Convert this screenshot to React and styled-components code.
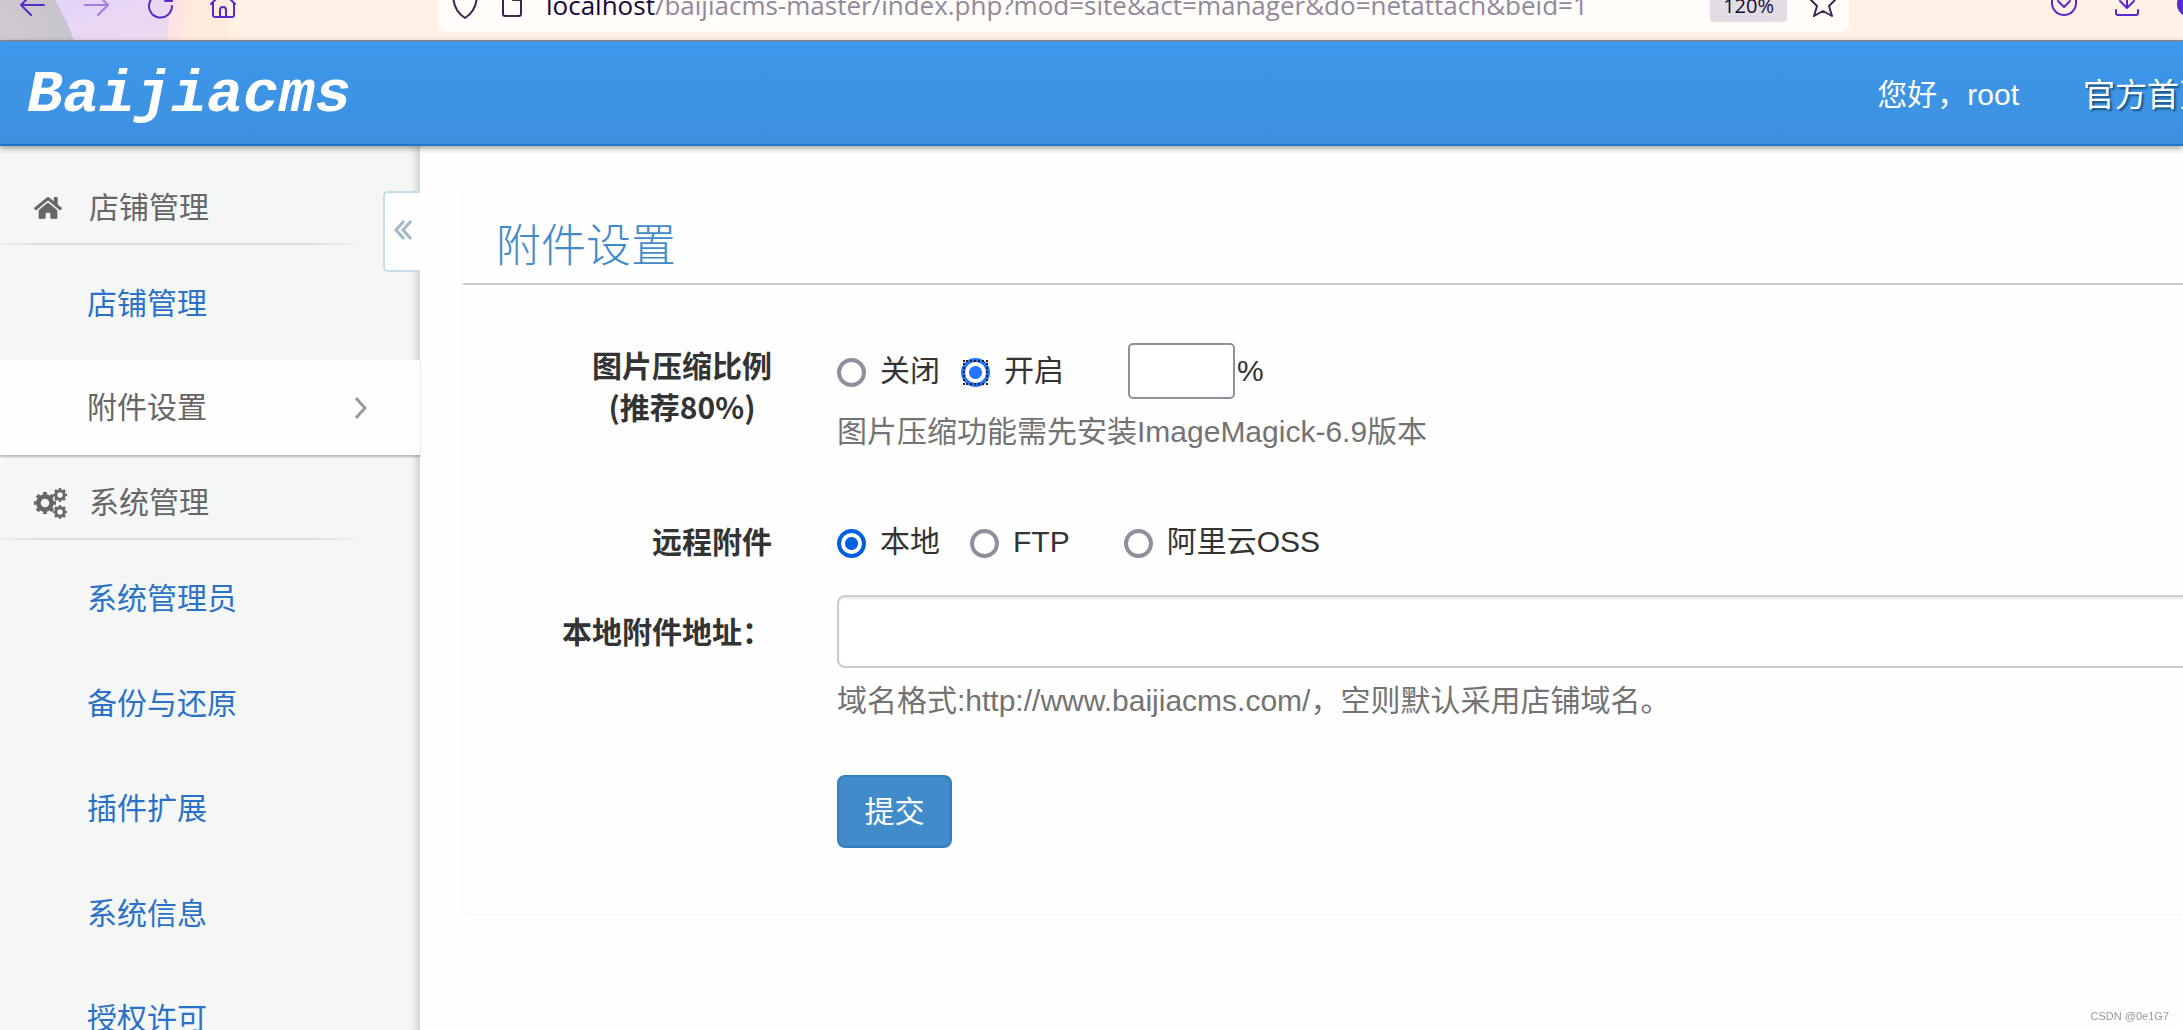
import React, { useState } from 'react';
import styled, { createGlobalStyle } from 'styled-components';
import { FaHome } from 'react-icons/fa';

const GlobalStyle = createGlobalStyle`
  * {
    box-sizing: border-box;
  }

  body {
    margin: 0;
    background: #fefefe;
    color: #333;
    font-family: "Liberation Sans", "Noto Sans CJK SC", sans-serif;
    font-size: 30px;
    line-height: 42px;
  }

  html, body, #root {
    height: 100%;
    overflow: hidden;
  }

  a {
    text-decoration: none;
  }
`

const Page = styled.div`
  display: flex;
  flex-direction: column;
  min-height: 100vh;
`

const BrowserBar = styled.div`
  display: flex;
  align-items: flex-end;
  flex: 0 0 41px;
  height: 41px;
  overflow: hidden;
  border-bottom: 1px solid #b08474;
  background:
    radial-gradient(circle at -104px 100px, #ddd6d8 0, #c9c5cc 187px, transparent 188px),
    linear-gradient(97deg, transparent 170px, #ffe2e2 171px 184px, transparent 185px),
    linear-gradient(160deg, #e2d2fb, #f6e0e6 170px) 0 0 / 176px 100% no-repeat,
    linear-gradient(90deg, #ffebdc 228px, #fff1e5 229px);
`

const NavButtons = styled.div`
  display: flex;
  flex: 0 0 438px;
  padding-left: 12px;
  gap: 24px;
`

const BarButton = styled.button`
  display: flex;
  width: 40px;
  height: 40px;
  padding: 0;
  border: 0;
  background: none;
  color: ${props => props.$dark ? '#352850' : '#592acb'};
  opacity: ${props => props.$faded ? 0.5 : 1};

  svg {
    width: 40px;
    height: 40px;
  }
`

const AddressBar = styled.div`
  display: flex;
  flex: 0 1 1411px;
  height: 40px;
  margin-bottom: 8px;
  padding: 0 6px 0 4px;
  align-items: flex-end;
  border-radius: 8px;
  background: #fffcfa;

  ${BarButton} {
    margin-bottom: -8px;
  }
`

const Url = styled.span`
  flex: 1;
  margin-left: 24px;
  color: #8f899c;
  font-family: "Open Sans", "Noto Sans", sans-serif;
  font-size: 26px;
  line-height: 34px;
  padding-bottom: 10px;
  white-space: nowrap;
`

const UrlHost = styled.span`
  color: #15083a;
`

const ZoomLevel = styled.button`
  height: 38px;
  margin: 0 16px 10px 0;
  padding: 6px 13px 0;
  border: 0;
  border-radius: 4px;
  background: #e2dde2;
  color: #15083a;
  font-family: "Open Sans", sans-serif;
  font-size: 20px;
  line-height: 32px;
`

const BarTools = styled.div`
  display: flex;
  flex: 0 0 auto;
  gap: 23px;
  margin-left: auto;
  margin-right: -27px;
`

const Header = styled.header`
  position: relative;
  z-index: 1;
  display: flex;
  align-items: center;
  flex: 0 0 105px;
  height: 105px;
  padding: 4px 0 0 27px;
  border-bottom: 2px solid #2175c5;
  background: linear-gradient(#3d97eb, #3e91df);
  box-shadow: 0 2px 6px rgba(0, 0, 0, 0.4);
  color: white;
  white-space: nowrap;
`

const Logo = styled.a`
  flex: 1;
  color: white;
  font-family: "Liberation Mono", monospace;
  font-size: 60px;
  font-style: italic;
  font-weight: bold;
  line-height: 64px;
`

const Greeting = styled.span`
  margin-right: 64px;
`

const HeaderLink = styled.a`
  flex: 0 0 100px;
  overflow: hidden;
  color: white;
  font-size: 32px;
  text-shadow: 2px 2px 2px #14507f;
`

const Body = styled.div`
  display: flex;
  flex: 1;
`

const Sidebar = styled.nav`
  position: relative;
  flex: 0 0 420px;
  padding-top: 29px;
  background: #f5f7f7;
  box-shadow: inset -9px 0 8px -6px rgba(0, 0, 0, 0.18);
`

const Group = styled.h2`
  display: flex;
  align-items: center;
  width: 355px;
  height: 70px;
  margin: 0;
  padding: 0 0 2px 34px;
  border-bottom: 2px solid;
  border-image: linear-gradient(90deg, #f0f0f0, #dcdcdc 12%, #dcdcdc 85%, #f0f0f0) 1;
  color: #666;
  font-size: 30px;
  font-weight: normal;
`

const GroupIcon = styled.span`
  display: flex;
  flex: 0 0 55px;
`

const Items = styled.ul`
  margin: 0;
  padding: 0 0 15px;
  list-style: none;
`

const Item = styled.li`
  display: flex;
  align-items: center;
  height: ${props => props.$active ? 95 : 105}px;
  margin-top: ${props => props.$active ? 4 : 0}px;
  background: ${props => props.$active ? '#fefefe' : 'none'};
  box-shadow: ${props => props.$active ? '0 2px 2px rgba(0, 0, 0, 0.25)' : 'none'};

  &:first-child {
    margin-top: 6px;
  }
`

const ItemLink = styled.a`
  display: flex;
  align-items: center;
  justify-content: space-between;
  flex: 1;
  padding: 0 53px 0 87px;
  color: ${props => props.$active ? '#666' : '#2a72c8'};
`

const Collapse = styled.button`
  position: absolute;
  top: 45px;
  right: 0;
  width: 37px;
  height: 81px;
  padding: 0;
  border: 2px solid #c5dcea;
  border-right: 0;
  border-radius: 5px 0 0 5px;
  background: #fefefe;
  color: #a4b9c6;
`

const Main = styled.main`
  flex: 1;
  min-width: 0;
  padding: 44px 0 0 41px;
`

const Panel = styled.form`
  display: flex;
  flex-direction: column;
  margin-right: -40px;
  padding-bottom: 66px;
  border: 2px solid #f8f8f8;
  border-top-color: transparent;
  border-radius: 8px;
`

const Title = styled.h1`
  margin: 0 0 58px;
  padding: 22px 0 11px 33px;
  border-bottom: 2px solid #ccc;
  color: #428bca;
  font-family: "Noto Sans CJK SC", sans-serif;
  font-size: 45px;
  font-weight: 300;
  line-height: 58px;
`

const Row = styled.div`
  display: flex;
  align-items: flex-start;
  margin-bottom: ${props => props.$gap}px;
`

const Label = styled.div`
  flex: 0 0 309px;
  margin-right: 65px;
  padding-top: ${props => props.$top || 0}px;
  text-align: right;
  font-family: "Noto Sans CJK SC", sans-serif;
  font-weight: bold;
  line-height: 42px;

  > span, > label {
    display: block;
    width: fit-content;
    margin-left: auto;
    text-align: center;
  }
`

const Field = styled.div`
  flex: 1;
  min-width: 0;
`

const Options = styled.div`
  display: flex;
  align-items: center;
  height: 56px;
`

const Option = styled.label`
  display: flex;
  align-items: center;
  gap: 14px;
  margin-right: ${props => props.$gap}px;
`

const Radio = styled.input`
  position: relative;
  appearance: none;
  width: 29px;
  height: 29px;
  margin: 2px 0 0;
  border: 4px solid #8f8f9d;
  border-radius: 50%;
  background: #fff;

  &:checked {
    border-color: ${props => props.$lit ? '#2374ff' : '#0060df'};
    background: radial-gradient(circle, ${props => props.$lit ? '#2374ff' : '#0060df'} 6px, #fff 7px);
  }

  &:checked::after {
    content: ${props => props.$lit ? '""' : 'none'};
    position: absolute;
    inset: -2px;
    border: 2px dotted #222;
  }
`

const RatioInput = styled.input`
  width: 107px;
  height: 56px;
  padding: 4px 8px;
  margin-right: 2px;
  border: 2px solid #8f8f9d;
  border-radius: 5px;
  background: #fff;
  font: inherit;
`

const TextInput = styled.input`
  display: block;
  width: 100%;
  height: 73px;
  padding: 8px 24px;
  border: 2px solid #ccc;
  border-radius: 8px;
  background: #fff;
  box-shadow: inset 0 2px 2px rgba(0, 0, 0, 0.08);
  font: inherit;
`

const Hint = styled.p`
  margin: 12px 0 0;
  color: #737373;
`

const Submit = styled.button`
  width: 115px;
  height: 73px;
  margin-left: 374px;
  border: 2px solid #357ebd;
  border-radius: 8px;
  background: #428bca;
  color: white;
  font: inherit;
`

const Watermark = styled.div`
  position: fixed;
  right: 14px;
  bottom: 6px;
  color: #999;
  font-size: 11px;
  line-height: 16px;
`

const Glyph = ({ children }) => (
  <svg viewBox="0 0 40 40" fill="none" stroke="currentColor" strokeWidth="2"
    strokeLinecap="round" strokeLinejoin="round" aria-hidden="true">
    {children}
  </svg>
)

// one gear is a solid ring plus a dashed ring for its eight teeth
const Gear = ({ x, y, r }) => (
  <g>
    <circle cx={x} cy={y} r={r * 0.6} strokeWidth={r * 0.42} />
    <circle cx={x} cy={y} r={r * 0.88} strokeWidth={r * 0.26} pathLength="16" strokeDasharray="1 1" strokeDashoffset="0.5" />
  </g>
)

const Gears = () => (
  <svg width="34" height="31" viewBox="0 0 34 31" fill="none" stroke="currentColor" aria-hidden="true">
    <Gear x={11} y={15} r={11} />
    <Gear x={26} y={7} r={7} />
    <Gear x={26} y={24} r={7} />
  </svg>
)

const Browser = () => (
  <BrowserBar>
    <NavButtons>
      <BarButton aria-label="Back">
        <Glyph><path d="M32 5H9M19 -5L9 5l10 10" /></Glyph>
      </BarButton>
      <BarButton aria-label="Forward" $faded>
        <Glyph><path d="M9 5h23M22 -5L32 5L22 15" /></Glyph>
      </BarButton>
      <BarButton aria-label="Reload">
        <Glyph><path d="M26 -4a11.5 11.5 0 1 0 6 10M32 -6v7h-7" /></Glyph>
      </BarButton>
      <BarButton aria-label="Home">
        <Glyph><path d="M7 4L19 -8L31 4M9 3v12q0 2 2 2h17q2 0 2-2V3M16 17V10q0-3 3-3t3 3v7" /></Glyph>
      </BarButton>
    </NavButtons>
    <AddressBar>
      <BarButton aria-label="Protection" $dark>
        <Glyph><path d="M11 -6L23 -9l12 3c0 12-4 19-12 24C15 13 11 6 11 -6z" /></Glyph>
      </BarButton>
      <BarButton aria-label="Site information" $dark>
        <Glyph><path d="M21 -8h10l8 8v14q0 2-2 2H23q-2 0-2-2zM31 -8v8h8" /></Glyph>
      </BarButton>
      <Url>
        <UrlHost>localhost</UrlHost>/baijiacms-master/index.php?mod=site&amp;act=manager&amp;do=netattach&amp;beid=1
      </Url>
      <ZoomLevel>120%</ZoomLevel>
      <BarButton aria-label="Bookmark" $dark>
        <Glyph><path d="M20 -10l4 9h9l-7 7 3 10-9-5-9 5 3-10-7-7h9z" /></Glyph>
      </BarButton>
    </AddressBar>
    <BarTools>
      <BarButton aria-label="Pocket">
        <Glyph><path d="M8 -7h24v10a12 12 0 0 1-24 0zM14 1l6 6 6-6" /></Glyph>
      </BarButton>
      <BarButton aria-label="Downloads">
        <Glyph><path d="M20 -8V8M13 1l7 7 7-7M9 10v3q0 2 2 2h18q2 0 2-2v-3" /></Glyph>
      </BarButton>
      <BarButton aria-label="Account">
        <Glyph><circle cx="20" cy="4" r="12" fill="currentColor" /></Glyph>
      </BarButton>
    </BarTools>
  </BrowserBar>
)

const MENU = [
  {
    title: '店铺管理',
    icon: <FaHome size={28} />,
    items: ['店铺管理', '附件设置'],
  },
  {
    title: '系统管理',
    icon: <Gears />,
    items: ['系统管理员', '备份与还原', '插件扩展', '系统信息', '授权许可'],
  },
]

const Menu = () => (
  <Sidebar>
    {MENU.map(group => (
      <div key={group.title}>
        <Group><GroupIcon>{group.icon}</GroupIcon>{group.title}</Group>
        <Items>
          {group.items.map(item => {
            const active = item === '附件设置'
            return (
              <Item key={item} $active={active}>
                <ItemLink href="#" $active={active}>
                  {item}
                  {active && (
                    <svg width="12" height="22" viewBox="0 0 12 22" fill="none" stroke="#999" strokeWidth="3">
                      <path d="M1 1l9 10-9 10" />
                    </svg>
                  )}
                </ItemLink>
              </Item>
            )
          })}
        </Items>
      </div>
    ))}
    <Collapse type="button" aria-label="Collapse menu">
      <svg width="18" height="20" viewBox="0 0 18 20" fill="none" stroke="currentColor" strokeWidth="3">
        <path d="M10 1L2 10l8 9M17 1L9 10l8 9" />
      </svg>
    </Collapse>
  </Sidebar>
)

const App = () => {
  const [compress, setCompress] = useState('on')
  const [storage, setStorage] = useState('local')

  return (
    <Page>
      <GlobalStyle />
      <Browser />
      <Header>
        <Logo href="#">Baijiacms</Logo>
        <Greeting>您好，root</Greeting>
        <HeaderLink href="#">官方首页</HeaderLink>
      </Header>
      <Body>
        <Menu />
        <Main>
          <Panel onSubmit={e => e.preventDefault()}>
            <Title>附件设置</Title>
            <Row $gap={61}>
              <Label><span>图片压缩比例<br />(推荐80%)</span></Label>
              <Field>
                <Options>
                  <Option $gap={21}>
                    <Radio type="radio" name="compress" checked={compress === 'off'} onChange={() => setCompress('off')} />
                    关闭
                  </Option>
                  <Option $gap={64}>
                    <Radio type="radio" name="compress" $lit checked={compress === 'on'} onChange={() => setCompress('on')} />
                    开启
                  </Option>
                  <RatioInput type="text" aria-label="图片压缩比例" />%
                </Options>
                <Hint>图片压缩功能需先安装ImageMagick-6.9版本</Hint>
              </Field>
            </Row>
            <Row $gap={25}>
              <Label $top={5}><span>远程附件</span></Label>
              <Options>
                <Option $gap={30}>
                  <Radio type="radio" name="storage" checked={storage === 'local'} onChange={() => setStorage('local')} />
                  本地
                </Option>
                <Option $gap={54}>
                  <Radio type="radio" name="storage" checked={storage === 'ftp'} onChange={() => setStorage('ftp')} />
                  FTP
                </Option>
                <Option $gap={0}>
                  <Radio type="radio" name="storage" checked={storage === 'oss'} onChange={() => setStorage('oss')} />
                  阿里云OSS
                </Option>
              </Options>
            </Row>
            <Row $gap={53}>
              <Label $top={14}><label htmlFor="address">本地附件地址：</label></Label>
              <Field>
                <TextInput id="address" type="text" />
                <Hint>域名格式:http://www.baijiacms.com/，空则默认采用店铺域名。</Hint>
              </Field>
            </Row>
            <Submit type="submit">提交</Submit>
          </Panel>
        </Main>
      </Body>
      <Watermark>CSDN @0e1G7</Watermark>
    </Page>
  )
}

export default App;
